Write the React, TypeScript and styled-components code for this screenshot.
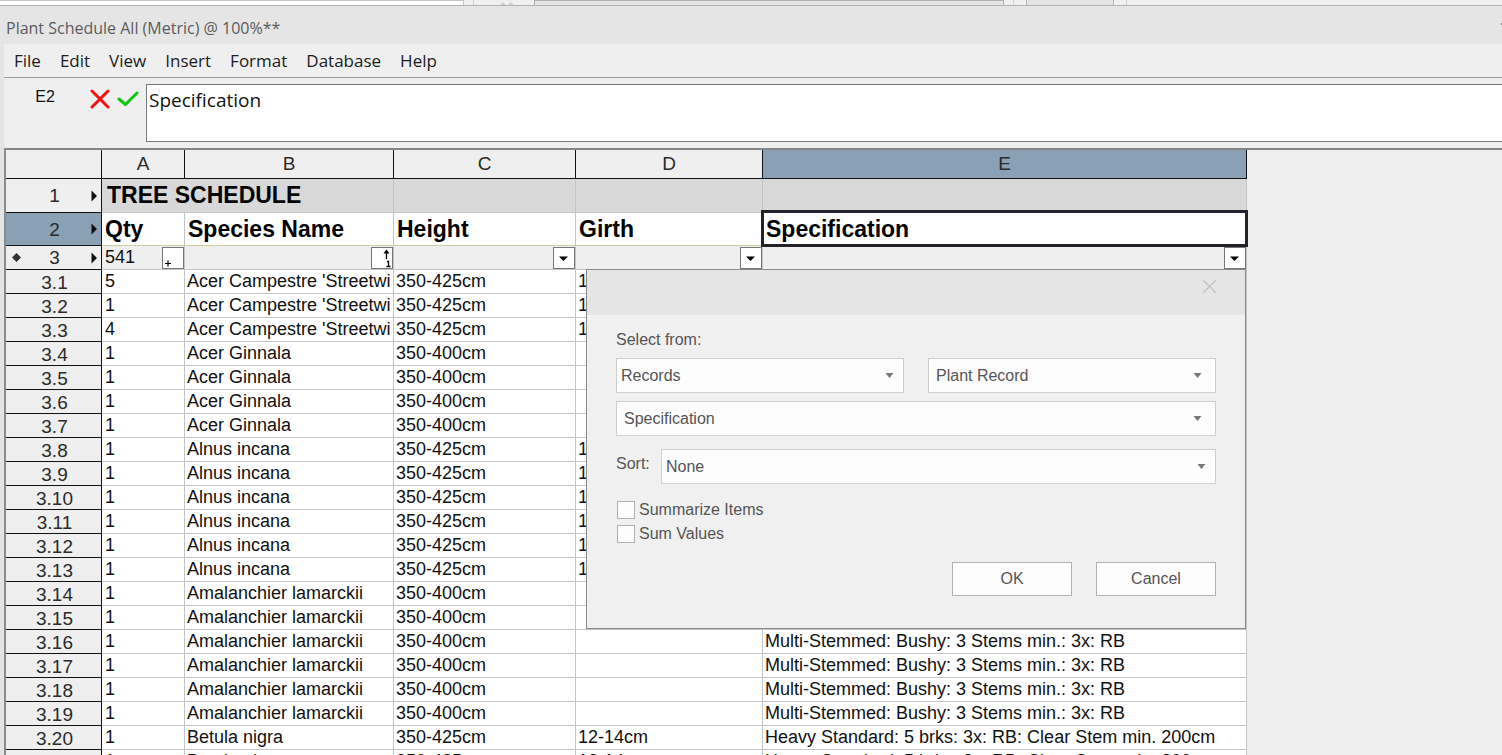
import React from "react";
import styled, { createGlobalStyle, css } from "styled-components";

const UI_FONT = '"Open Sans", "Noto Sans", sans-serif';
const SHEET_FONT = '"Liberation Sans", Arial, sans-serif';

const GlobalStyle = createGlobalStyle`
  *, *::before, *::after { box-sizing: border-box; }
  body { margin: 0; background: #efefef; overflow: hidden; font-family: ${SHEET_FONT}; color: #111; }
  button, input, select, textarea { font-family: inherit; color: inherit; margin: 0; border-radius: 0; }
`;

const Window = styled.div`
  display: flex;
  flex-direction: column;
  height: 100vh;
  overflow: hidden;
`;

/* Sliver of the main application's toolbar, above this window */
const Backdrop = styled.div`
  display: flex;
  height: 5px;
  overflow: hidden;
  background: #f0f0f0;
`;
const BackField = styled.div`
  width: 464px;
  margin-right: 9px;
  background: #fff;
  border-top: 1px solid #c4c4c4;
  border-right: 1px solid #c4c4c4;
`;
const BackSeparator = styled.div`
  width: 1px;
  background: #d4d4d4;
`;
const BackScroller = styled.div`
  width: 470px;
  margin: 0 9px 0 20px;
  background: #e6e6e6;
  border: 1px solid #b0b0b0;
  border-bottom: 0;
`;
const BackButton = styled.div`
  width: 88px;
  margin: 0 12px;
  background: #e4e4e4;
  border: solid #b8b8b8;
  border-width: 0 1px;
`;
const BackArrow = styled.svg`
  width: 14px;
  height: 5px;
  margin-left: 26px;
`;

const TitleBar = styled.header`
  display: flex;
  align-items: center;
  justify-content: space-between;
  height: 39px;
  padding: 5px 0 0 6px;
  border-top: 1px solid #b4b4b4;
  background: #e5e5e5;
`;
const Title = styled.h1`
  margin: 0;
  font: 400 16px/22px ${UI_FONT};
  color: #5c5c5c;
  white-space: pre;
`;
const TitleMark = styled.svg`
  width: 1px;
  height: 16px;
`;

const Frame = styled.div`
  flex: 1;
  min-height: 0;
  display: flex;
  flex-direction: column;
  border-left: 4px solid #e4e4e4;
`;

const MenuBar = styled.nav`
  display: flex;
  align-items: center;
  gap: 19px;
  height: 34px;
  padding-left: 10px;
  border-bottom: 1px solid #999;
`;
const MenuItem = styled.button`
  padding: 0;
  border: 0;
  background: none;
  font: 400 17px/24px ${UI_FONT};
  color: #1c1c1c;
`;

const FormulaBar = styled.div`
  display: flex;
  align-items: flex-start;
  height: 70px;
  padding: 6px 0;
`;
const CellName = styled.output`
  width: 82px;
  padding-top: 3px;
  font-size: 16px;
  line-height: 20px;
  text-align: center;
`;
const FormulaButton = styled.button`
  display: flex;
  width: 28px;
  height: 30px;
  padding: 0;
  align-items: center;
  justify-content: center;
  border: 0;
  background: none;
`;
const FormulaInput = styled.textarea`
  flex: 1;
  height: 58px;
  margin-left: 4px;
  padding: 2px;
  border: 1px solid #7a7a7a;
  border-right: 0;
  outline: 0;
  resize: none;
  background: #fff;
  font: 400 19px/26px ${UI_FONT};
`;

const SheetArea = styled.main`
  flex: 1;
  min-height: 0;
  overflow: hidden;
  border-top: 2px solid #858585;
  border-left: 2px solid #8a8a8a;
`;
const SheetBody = styled.div`
  position: relative;
  width: max-content;
`;

const Grid = styled.table`
  table-layout: fixed;
  width: 1241px;
  border-collapse: separate;
  border-spacing: 0;
`;
const Column = styled.col<{ $w: number }>`
  width: ${(p) => p.$w}px;
`;

const headLook = css<{ $active?: boolean }>`
  padding: 0;
  font-size: 19px;
  font-weight: 400;
  color: #2a2a2a;
  background: ${(p) => (p.$active ? "#89a0b5" : "#efefef")};
  border: solid #111;
  border-width: 0 1px 1px 0;
`;
const ColumnHead = styled.th<{ $active?: boolean }>`
  ${headLook}
  height: 29px;
  line-height: 26px;
`;
const RowHead = styled.th<{ $active?: boolean }>`
  ${headLook}
`;
const RowHeadInner = styled.div<{ $low?: boolean }>`
  display: grid;
  grid-template-columns: 1fr auto 1fr;
  align-items: center;
  padding: ${(p) => (p.$low ? 2 : 0)}px 3px 0 5px;
  line-height: ${(p) => (p.$low ? 21 : 23)}px;
`;
const Marker = styled.svg<{ $end?: boolean }>`
  display: block;
  justify-self: ${(p) => (p.$end ? "end" : "start")};
`;

type Kind = "banner" | "title" | "filter" | "data";
const rowHeights: Record<Kind, number> = { banner: 34, title: 33, filter: 24, data: 24 };

const Row = styled.tr<{ $kind: Kind }>`
  height: ${(p) => rowHeights[p.$kind]}px;
`;
const Cell = styled.td<{ $kind: Kind; $selected?: boolean }>`
  padding: 0 0 0 2px;
  white-space: nowrap;
  font-size: 18px;
  line-height: 22px;
  background: #fff;
  border: solid #c4c4c4;
  border-width: 0 1px 1px 0;
  vertical-align: top;

  &:nth-child(2) {
    padding-left: 3px;
  }
  ${(p) =>
    p.$kind === "filter" &&
    css`
      background: #efefef;
    `}
  ${(p) =>
    (p.$kind === "banner" || p.$kind === "title") &&
    css`
      padding-left: 3px;
      font-size: 23px;
      font-weight: 700;
      line-height: 32px;
      color: #000;
    `}
  ${(p) =>
    p.$kind === "banner" &&
    css`
      background: #d8d8d8;
      line-height: 33px;
      &:nth-child(2) {
        padding-left: 5px;
      }
    `}
  ${(p) =>
    p.$kind === "title" &&
    css`
      border-bottom-color: #cfcf9c;
    `}
  ${(p) =>
    p.$selected &&
    css`
      position: relative;
      &::after {
        content: "";
        position: absolute;
        inset: -3px -2px -2px -2px;
        border: 3px solid #222228;
      }
    `}
`;
const FilterInner = styled.div`
  display: flex;
  justify-content: space-between;
  align-items: flex-start;
  height: 23px;
  padding-top: 1px;
  line-height: 20px;
`;
const FilterButton = styled.button`
  flex: none;
  margin-left: auto;
  width: 22px;
  height: 22px;
  padding: 0;
  border: 1px solid #777;
  background: #fff;
  display: flex;
`;

const Dialog = styled.section`
  position: absolute;
  top: 119px;
  right: 1px;
  width: 660px;
  border: 1px solid #8a8a8a;
  background: #f0f0f0;
  font-size: 16px;
  color: #555;
`;
const DialogBar = styled.div`
  display: flex;
  justify-content: flex-end;
  align-items: flex-start;
  height: 45px;
  padding: 9px 28px;
  background: #e5e5e5;
`;
const CloseButton = styled.button`
  display: flex;
  padding: 0;
  border: 0;
  background: none;
`;
const DialogBody = styled.form`
  display: flex;
  flex-direction: column;
  padding: 15px 29px 32px;
`;
const FieldLabel = styled.label`
  line-height: 20px;
`;
const SelectRow = styled.div`
  display: flex;
  gap: 24px;
  margin: 8px 0;
`;
const SortRow = styled.div`
  display: grid;
  grid-template-columns: 45px 1fr;
  align-items: start;
  margin: 13px 0 14px;
  ${FieldLabel} {
    padding-top: 5px;
  }
`;
const SelectBox = styled.div<{ $inset?: boolean }>`
  flex: 1;
  display: grid;
  align-items: center;
  > * {
    grid-area: 1 / 1;
  }
  > svg {
    justify-self: end;
    margin-right: ${(p) => (p.$inset ? 14 : 10)}px;
    pointer-events: none;
  }
`;
const SelectControl = styled.select<{ $inset?: boolean }>`
  appearance: none;
  width: 100%;
  height: 35px;
  padding: 0 30px 0 ${(p) => (p.$inset ? 7 : 4)}px;
  border: 1px solid #cfcfcf;
  background: #fdfdfd;
  font-size: 16px;
`;
const CheckRow = styled.label`
  display: flex;
  align-items: center;
  gap: 4px;
  height: 24px;
  padding-left: 1px;
`;
const CheckInput = styled.input`
  appearance: none;
  width: 18px;
  height: 18px;
  border: 1px solid #b0b0b0;
  background: #fdfdfd;
`;
const Actions = styled.div`
  display: flex;
  justify-content: flex-end;
  gap: 24px;
  margin-top: 16px;
`;
const ActionButton = styled.button`
  width: 120px;
  height: 34px;
  padding: 0;
  border: 1px solid #b4b4b4;
  background: #fdfdfd;
  font-size: 16px;
`;

const menus = ["File", "Edit", "View", "Insert", "Format", "Database", "Help"];
const columns = [
  { name: "A", width: 83 },
  { name: "B", width: 209 },
  { name: "C", width: 182 },
  { name: "D", width: 187 },
  { name: "E", width: 484 },
];

const MULTI = "Multi-Stemmed: Bushy: 3 Stems min.: 3x: RB";
const HEAVY = "Heavy Standard: 5 brks: 3x: RB: Clear Stem min. 200cm";
const campestre = (qty: string) => [qty, "Acer Campestre 'Streetwi", "350-425cm", "1", ""];
const ginnala = ["1", "Acer Ginnala", "350-400cm", "", ""];
const alnus = ["1", "Alnus incana", "350-425cm", "1", ""];
const amalanchier = (spec: string) => ["1", "Amalanchier lamarckii", "350-400cm", "", spec];
const betula = ["1", "Betula nigra", "350-425cm", "12-14cm", HEAVY];

const records: string[][] = [
  campestre("5"),
  campestre("1"),
  campestre("4"),
  ...Array(4).fill(ginnala),
  ...Array(6).fill(alnus),
  ...Array(2).fill(amalanchier("")),
  ...Array(4).fill(amalanchier(MULTI)),
  ...Array(2).fill(betula),
];

function RowLabel({ text, expand, diamond }: { text: string; expand?: boolean; diamond?: boolean }) {
  return (
    <RowHeadInner $low={!expand}>
      {diamond ? (
        <Marker width="11" height="11" viewBox="0 0 11 11">
          <path d="M5.5 1 10 5.5 5.500 10 1 5.500Z" fill="#333" />
        </Marker>
      ) : (
        <span />
      )}
      <span>{text}</span>
      {expand && (
        <Marker $end width="7" height="12" viewBox="0 0 7 12">
          <path d="M0.500 0.500 6 6 0.500 11.500Z" fill="#111" />
        </Marker>
      )}
    </RowHeadInner>
  );
}

function FilterIcon({ kind }: { kind: "sum" | "sort" | "menu" }) {
  return (
    <svg width="20" height="20" viewBox="0 0 20 20" fill="none" stroke="#000">
      {kind === "sum" && <path d="M2 15.500h6M5 12.500v6" strokeWidth="1.200" />}
      {kind === "sort" && (
        <>
          <path d="M14.500 11V3" strokeWidth="1.300" />
          <path d="M11.500 5.500 14.500 1.500 17.500 5.500Z" fill="#000" stroke="none" />
          <path d="M15 13.500h1.500v5M14.500 18.500h4" strokeWidth="1.300" />
        </>
      )}
      {kind === "menu" && <path d="M5 8.500h9L9.500 13Z" fill="#000" stroke="none" />}
    </svg>
  );
}

function Select({ id, label, value, inset }: { id: string; label?: string; value: string; inset?: boolean }) {
  return (
    <SelectBox $inset={inset}>
      <SelectControl id={id} aria-label={label} $inset={inset} defaultValue={value}>
        <option>{value}</option>
      </SelectControl>
      <svg width="9" height="5" viewBox="0 0 9 5">
        <path d="M0.500 0h8L4.500 5Z" fill="#777" />
      </svg>
    </SelectBox>
  );
}

function CriteriaDialog() {
  return (
    <Dialog role="dialog" aria-label="Column filter">
      <DialogBar>
        <CloseButton aria-label="Close">
          <svg width="15" height="15" viewBox="0 0 15 15" stroke="#c2c2c2" strokeWidth="1.400">
            <path d="M1 1 14 14M14 1 1 14" />
          </svg>
        </CloseButton>
      </DialogBar>
      <DialogBody onSubmit={(e) => e.preventDefault()}>
        <FieldLabel htmlFor="source">Select from:</FieldLabel>
        <SelectRow>
          <Select id="source" value="Records" />
          <Select id="record" label="Record" value="Plant Record" inset />
        </SelectRow>
        <Select id="field" label="Field" value="Specification" inset />
        <SortRow>
          <FieldLabel htmlFor="sort">Sort:</FieldLabel>
          <Select id="sort" value="None" />
        </SortRow>
        <CheckRow>
          <CheckInput type="checkbox" />
          Summarize Items
        </CheckRow>
        <CheckRow>
          <CheckInput type="checkbox" />
          Sum Values
        </CheckRow>
        <Actions>
          <ActionButton type="submit">OK</ActionButton>
          <ActionButton type="button">Cancel</ActionButton>
        </Actions>
      </DialogBody>
    </Dialog>
  );
}

export default function App() {
  return (
    <Window>
      <GlobalStyle />
      <Backdrop>
        <BackField />
        <BackSeparator />
        <BackArrow viewBox="0 0 14 5">
          <path d="M0 5 3 2 6 5ZM8 5 11 2 14 5Z" fill="#d0d0d0" />
        </BackArrow>
        <BackScroller />
        <BackSeparator />
        <BackButton />
        <BackSeparator />
      </Backdrop>
      <TitleBar>
        <Title>Plant Schedule All (Metric) @ 100%**</Title>
        <TitleMark viewBox="0 0 1 16">
          <path d="M0 3h1v2H0Z" fill="#777" />
        </TitleMark>
      </TitleBar>
      <Frame>
        <MenuBar>
          {menus.map((m) => (
            <MenuItem key={m}>{m}</MenuItem>
          ))}
        </MenuBar>
        <FormulaBar>
          <CellName>E2</CellName>
          <FormulaButton aria-label="Cancel edit">
            <svg width="20" height="20" viewBox="0 0 20 20" stroke="#fb0d0d" strokeWidth="3" strokeLinecap="round">
              <path d="M2 2 18 18M18 2 2 18" />
            </svg>
          </FormulaButton>
          <FormulaButton aria-label="Accept edit">
            <svg width="22" height="16" viewBox="0 0 22 16" fill="none" stroke="#0ec40e" strokeWidth="3" strokeLinecap="round" strokeLinejoin="round">
              <path d="M2 8 8.500 13.500 20 2" />
            </svg>
          </FormulaButton>
          <FormulaInput aria-label="Cell contents" defaultValue="Specification" spellCheck={false} />
        </FormulaBar>
        <SheetArea>
          <SheetBody>
            <Grid>
              <colgroup>
                <Column $w={96} />
                {columns.map((c) => (
                  <Column key={c.name} $w={c.width} />
                ))}
              </colgroup>
              <thead>
                <tr>
                  <ColumnHead />
                  {columns.map((c) => (
                    <ColumnHead key={c.name} scope="col" $active={c.name === "E"}>
                      {c.name}
                    </ColumnHead>
                  ))}
                </tr>
              </thead>
              <tbody>
                <Row $kind="banner">
                  <RowHead scope="row">
                    <RowLabel text="1" expand />
                  </RowHead>
                  <Cell $kind="banner" colSpan={2}>TREE SCHEDULE</Cell>
                  <Cell $kind="banner" />
                  <Cell $kind="banner" />
                  <Cell $kind="banner" />
                </Row>
                <Row $kind="title">
                  <RowHead scope="row" $active>
                    <RowLabel text="2" expand />
                  </RowHead>
                  {["Qty", "Species Name", "Height", "Girth", "Specification"].map((t) => (
                    <Cell key={t} $kind="title" $selected={t === "Specification"}>{t}</Cell>
                  ))}
                </Row>
                <Row $kind="filter">
                  <RowHead scope="row">
                    <RowLabel text="3" expand diamond />
                  </RowHead>
                  {columns.map((c) => {
                    const kind = c.name === "A" ? "sum" : c.name === "B" ? "sort" : "menu";
                    return (
                      <Cell key={c.name} $kind="filter">
                        <FilterInner>
                          {c.name === "A" && <span>541</span>}
                          <FilterButton aria-label={`Column ${c.name} ${kind}`}>
                            <FilterIcon kind={kind} />
                          </FilterButton>
                        </FilterInner>
                      </Cell>
                    );
                  })}
                </Row>
                {records.map((cells, i) => (
                  <Row key={i} $kind="data">
                    <RowHead scope="row">
                      <RowLabel text={`3.${i + 1}`} />
                    </RowHead>
                    {cells.map((text, j) => (
                      <Cell key={j} $kind="data">{text}</Cell>
                    ))}
                  </Row>
                ))}
              </tbody>
            </Grid>
            <CriteriaDialog />
          </SheetBody>
        </SheetArea>
      </Frame>
    </Window>
  );
}
